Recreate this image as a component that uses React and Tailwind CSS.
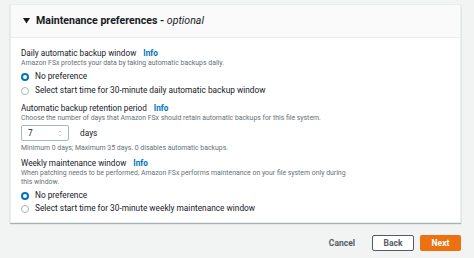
import React from 'react';

const Radio = ({ checked, label }) => (
  <label className="flex items-center gap-[6px] h-[13px]">
    {checked ? (
      <span className="w-[8px] h-[8px] rounded-full border-[2.5px] border-[#0073bb] bg-white" />
    ) : (
      <span className="w-[8px] h-[8px] rounded-full border border-[#aab7b8] bg-white" />
    )}
    <span className="text-[8.3px] leading-[13px] text-[#16191f]">{label}</span>
  </label>
);

const FieldLabel = ({ children }) => (
  <div className="flex items-center gap-[7px] h-[11px] text-[8.2px] leading-[11px] text-[#16191f]">
    <span>{children}</span>
    <span className="font-bold text-[#0073bb]">Info</span>
  </div>
);

const Hint = ({ children }) => (
  <p className="text-[6.9px] leading-[9px] text-[#687078]">{children}</p>
);

export default function App() {
  return (
    <div
      className="w-[474px] h-[258px] bg-[#f2f3f3] pt-[4px] pl-[10px] pr-[13px]"
      style={{ fontFamily: 'Roboto, "Liberation Sans", Arial, sans-serif' }}
    >
      {/* Card */}
      <div className="bg-white border border-[#eaeded] shadow-[0_1px_1px_rgba(0,28,36,0.3)]">
        <div className="h-[33px] bg-[#fafafa] border-b border-[#eaeded] flex items-center pl-[12px] gap-[6px]">
          <svg width="7" height="6" viewBox="0 0 7 6">
            <path d="M0 0 H7 L3.5 5.5 Z" fill="#16191f" />
          </svg>
          <h2 className="text-[10.6px] font-bold text-[#16191f]">
            Maintenance preferences - <i className="font-normal">optional</i>
          </h2>
        </div>

        <div className="pl-[10px] pr-[12px] pt-[10px] pb-[7px] flex flex-col">
          <FieldLabel>Daily automatic backup window</FieldLabel>
          <Hint>Amazon FSx protects your data by taking automatic backups daily.</Hint>
          <div className="flex flex-col gap-[1px] mt-[2px]">
            <Radio checked label="No preference" />
            <Radio label="Select start time for 30-minute daily automatic backup window" />
          </div>

          <div className="mt-[6px]">
            <FieldLabel>Automatic backup retention period</FieldLabel>
            <Hint>Choose the number of days that Amazon FSx should retain automatic backups for this file system.</Hint>
          </div>
          <div className="flex items-center gap-[11px] mt-[2px]">
            <div className="w-[48px] h-[16px] border border-[#aab7b8] rounded-[2px] flex items-center justify-between pl-[6px] pr-[6px]">
              <span className="text-[8.3px] text-[#16191f]">7</span>
              <svg width="4" height="7" viewBox="0 0 4 7">
                <path d="M0.5 2.5 L2 1 L3.5 2.5 M0.5 4.5 L2 6 L3.5 4.5" stroke="#c7cccf" strokeWidth="0.8" fill="none" />
              </svg>
            </div>
            <span className="text-[8.3px] text-[#16191f]">days</span>
          </div>
          <div className="mt-[3px]">
            <Hint>Minimum 0 days; Maximum 35 days. 0 disables automatic backups.</Hint>
          </div>

          <div className="mt-[5px]">
            <FieldLabel>Weekly maintenance window</FieldLabel>
            <Hint>
              When patching needs to be performed, Amazon FSx performs maintenance on your file system only during
              <br />
              this window.
            </Hint>
          </div>
          <div className="flex flex-col mt-[2px]">
            <Radio checked label="No preference" />
            <Radio label="Select start time for 30-minute weekly maintenance window" />
          </div>
        </div>
      </div>

      {/* Actions */}
      <div className="flex justify-end items-center mt-[12px] gap-[6px]">
        <button className="text-[8.5px] font-bold text-[#545b64] px-[11px] h-[16px]">Cancel</button>
        <button className="w-[42px] h-[16px] bg-white border border-[#545b64] rounded-[2px] text-[8.5px] font-bold text-[#545b64]">Back</button>
        <button className="w-[41px] h-[16px] bg-[#ec7211] rounded-[2px] text-[8.5px] font-bold text-white">Next</button>
      </div>
    </div>
  );
}
